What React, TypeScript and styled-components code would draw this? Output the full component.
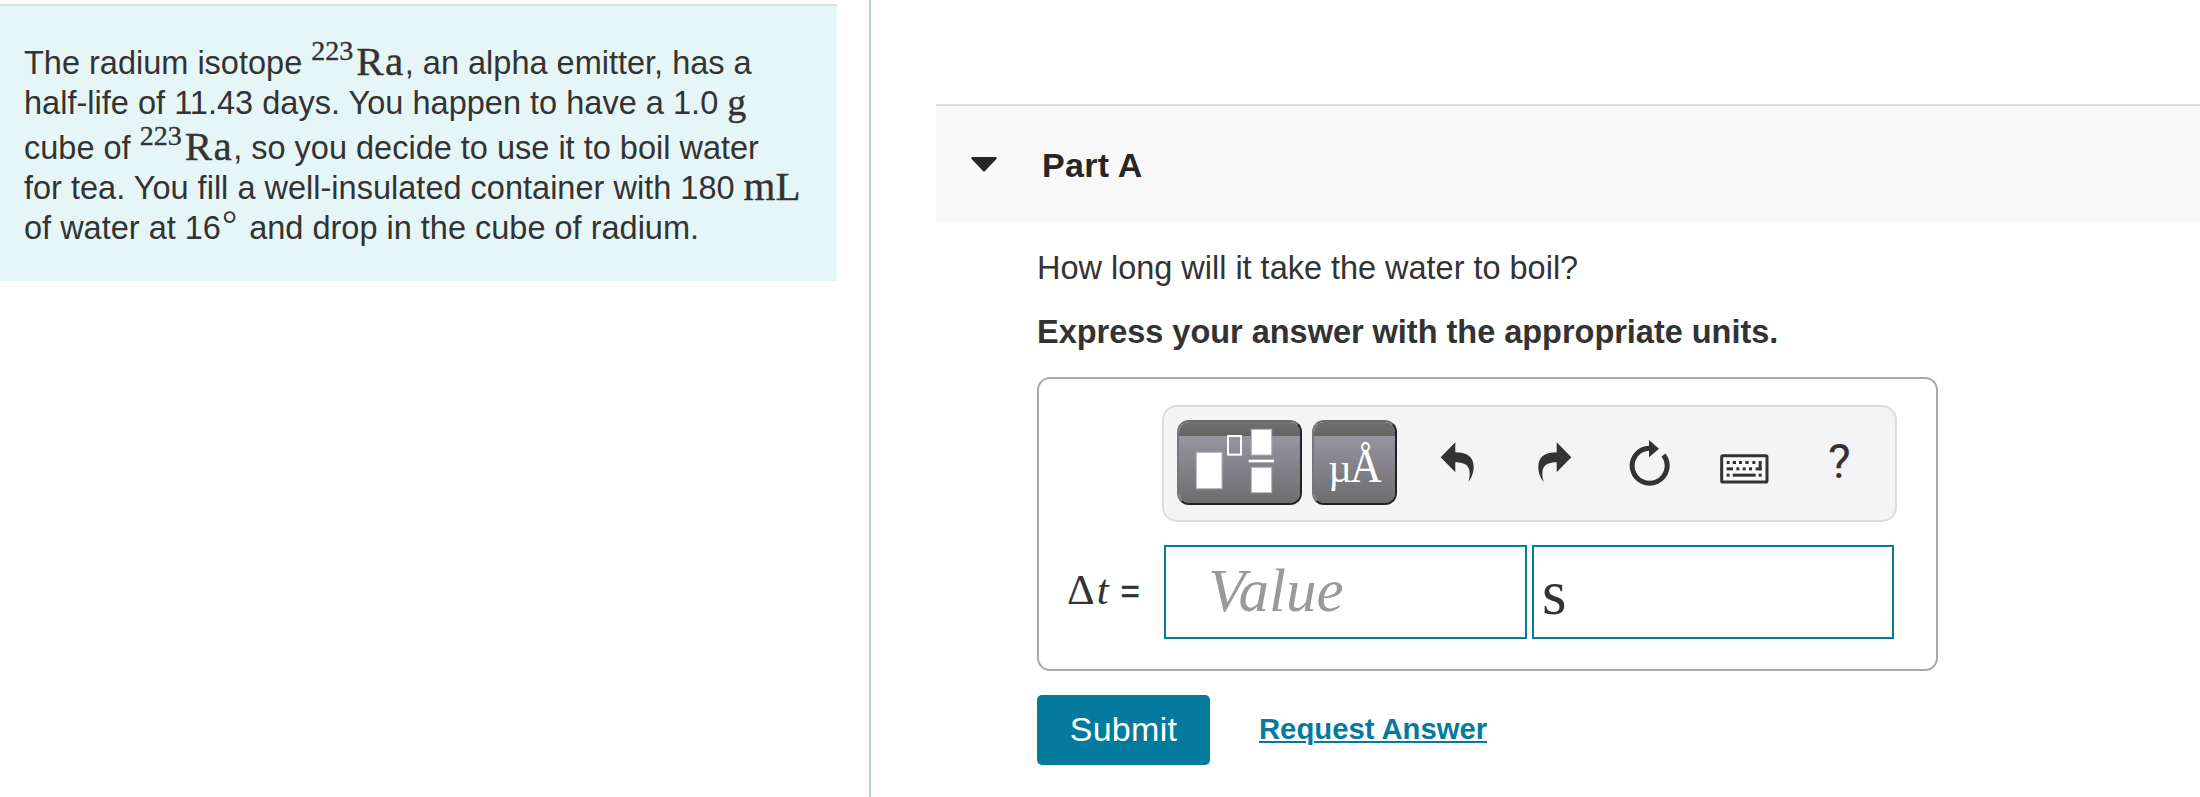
import React from "react";
import styled, { createGlobalStyle, css } from "styled-components";

const sans = `"Liberation Sans", Arial, sans-serif`;
const serif = `"Liberation Serif", "Times New Roman", serif`;
const teal = "#047a9c";

const Global = createGlobalStyle`
  * { box-sizing: border-box; }
  body { margin: 0; background: #fff; color: #333; font-family: ${sans}; overflow: hidden; }
`;

const Page = styled.main`
  display: flex;
  height: 797px;
  width: 2200px;
`;

const ProblemColumn = styled.aside`
  width: 871px;
  padding: 4px 32px 0 0;
  border-right: 2px solid #bccde0;
`;

const ProblemCard = styled.section`
  width: 837px;
  height: 277px;
  padding: 37px 0 0 24px;
  border-top: 2px solid #ddd;
  background: #e6f6f7;
`;

const Line = styled.div<{ $tall?: boolean; $spacing?: number }>`
  height: 40px;
  margin-top: ${(p) => (p.$tall ? 5 : 0)}px;
  font-size: 32.5px;
  line-height: 40px;
  white-space: pre;
  letter-spacing: ${(p) => p.$spacing ?? 0}px;
`;

const Unit = styled.span<{ $size?: number }>`
  font-family: ${serif};
  font-size: ${(p) => p.$size ?? 41}px;
  line-height: 0;
  letter-spacing: 0;
  vertical-align: -1px;
  -webkit-text-stroke: 0.4px #333;
`;

const Element = styled(Unit)`
  margin-left: 3px;
  letter-spacing: 1.5px;
`;

const MassNumber = styled.span`
  font-family: ${serif};
  font-size: 28px;
  line-height: 0;
  letter-spacing: 0;
  vertical-align: 14px;
  -webkit-text-stroke: 0.4px #333;
`;

const Degree = styled.span`
  margin: 0 3px 0 1px;
  font-family: ${serif};
  font-size: 38px;
  line-height: 0;
  vertical-align: 2px;
`;

const AnswerColumn = styled.section`
  flex: 1;
  padding: 104px 0 0 65px;
`;

const PartHeader = styled.header`
  display: flex;
  align-items: center;
  gap: 45px;
  height: 118px;
  padding-left: 35px;
  border-top: 2px solid #ddd;
  background: #f9f9f9;
`;

const Caret = styled.svg`
  width: 26px;
  height: 15px;
  fill: #262626;
`;

const PartTitle = styled.h2`
  margin: 0;
  padding-top: 2px;
  color: #262626;
  font-size: 34px;
  letter-spacing: 0.3px;
`;

const PartBody = styled.div`
  padding: 26px 0 0 101px;
`;

const Question = styled.p<{ $strong?: boolean }>`
  margin: 0 0 ${(p) => (p.$strong ? 25 : 24)}px;
  font-size: 32.5px;
  line-height: 40px;
  white-space: nowrap;
  letter-spacing: -0.02px;
  ${(p) => p.$strong && css`font-weight: 700;`}
`;

const AnswerBox = styled.div`
  width: 901px;
  height: 294px;
  border: 2px solid #a9a9a9;
  border-radius: 13px;
  padding: 26px 0 0;
`;

const Toolbar = styled.div`
  display: flex;
  height: 117px;
  width: 735px;
  margin-left: 123px;
  padding: 13px;
  border: 2px solid #ddd;
  border-radius: 15px;
  background: #f4f4f4;
`;

const PaletteButton = styled.button<{ $width: number }>`
  width: ${(p) => p.$width}px;
  height: 85px;
  flex: none;
  padding: 0;
  margin-right: 10px;
  border: 2px solid;
  border-color: #6b6b6b #222 #222 #777;
  border-radius: 12px;
  background: linear-gradient(#707070, #636363 14px, #9894a1 14px, #6d6d6d) padding-box;
  color: #fff;
`;

const TemplateIcon = styled.svg`
  display: block;
  width: 121px;
  height: 81px;
  fill: #fff;
`;

const UnitsLabel = styled.span`
  display: flex;
  align-items: baseline;
  justify-content: center;
  padding: 11px 0 0 1px;
  font-family: ${serif};
  font-size: 41px;
  line-height: 60px;
`;

const Angstrom = styled.span`
  display: inline-block;
  margin-left: -2px;
  font-size: 44px;
  line-height: 60px;
  transform: scaleY(1.12);
  transform-origin: 50% 75%;
`;

const ToolRow = styled.div`
  display: flex;
  align-items: flex-start;
  padding: 0 0 0 33px;
`;

const ToolButton = styled.button<{ $top: number; $gap: number }>`
  display: block;
  flex: none;
  margin: ${(p) => p.$top}px ${(p) => p.$gap}px 0 0;
  padding: 0;
  border: 0;
  background: none;
  color: #333;
  line-height: 0;
`;

const ToolIcon = styled.svg<{ $flip?: boolean }>`
  display: block;
  fill: currentColor;
  ${(p) => p.$flip && css`transform: scaleX(-1);`}
`;

const HelpMark = styled.span`
  display: block;
  font: 48px/46px Roboto, sans-serif;
`;

const EntryRow = styled.div`
  display: flex;
  margin-top: 23px;
`;

const EntryLabel = styled.div`
  width: 125px;
  padding: 17px 0 0 28px;
  font-family: ${serif};
  font-size: 43px;
  line-height: 56px;
  white-space: nowrap;
`;

const Variable = styled.i`
  margin-left: 2px;
`;

const Equals = styled.span`
  margin-left: 12px;
  font: 33px/0 ${sans};
  vertical-align: 1px;
  -webkit-text-stroke: 0.6px #333;
`;

const Field = styled.input<{ $kind: "value" | "units" }>`
  width: ${(p) => (p.$kind === "value" ? 363 : 362)}px;
  height: 94px;
  margin-right: 5px;
  padding: ${(p) => (p.$kind === "value" ? "0 0 2px 42px" : "3px 0 0 8px")};
  border: 2px solid ${teal};
  border-radius: 0;
  outline: 0;
  background: #fff;
  color: #333;
  font-family: ${serif};
  font-size: ${(p) => (p.$kind === "value" ? 61 : 63)}px;
  &::placeholder { color: #999; font-style: italic; opacity: 1; }
`;

const Actions = styled.div`
  display: flex;
  align-items: flex-start;
  margin-top: 24px;
`;

const Submit = styled.button`
  width: 173px;
  height: 70px;
  padding: 0 0 1px;
  border: 0;
  border-radius: 5px;
  background: ${teal};
  color: #fff;
  font: 34px ${sans};
  letter-spacing: 0.3px;
`;

const RequestLink = styled.a`
  margin: 16px 0 0 49px;
  color: ${teal};
  font-size: 29.25px;
  font-weight: 700;
  line-height: 36px;
  text-decoration: underline;
  text-decoration-thickness: 2px;
  text-underline-offset: 2px;
`;

const ARROW =
  "M0.7 15.3L15.3 0.3V10.3C26 10.3 33.7 14 33.7 25C33.7 31 31 37 28.3 40C29.5 36 30 33 29.5 29C28.5 22 22 20.3 15.3 20.3V30.3Z";

const keys = [
  [20, 21, 9, 9], [38, 21, 10, 9], [57, 21, 9, 9], [76, 21, 10, 9], [97, 21, 9, 9],
  [116, 21, 9, 28], [20, 40, 19, 9], [49, 40, 9, 9], [68, 40, 9, 9], [87, 40, 9, 9],
  [107, 40, 18, 9], [20, 59, 9, 9], [38, 59, 69, 9], [116, 59, 9, 9],
];

export default function App() {
  return (
    <Page>
      <Global />
      <ProblemColumn>
        <ProblemCard>
          <Line>{"The radium isotope "}<MassNumber>223</MassNumber><Element>Ra</Element>{", an alpha emitter, has a"}</Line>
          <Line $spacing={0.02}>{"half-life of 11.43 days. You happen to have a 1.0 "}<Unit $size={38}>g</Unit></Line>
          <Line $tall>{"cube of "}<MassNumber>223</MassNumber><Element>Ra</Element>{", so you decide to use it to boil water"}</Line>
          <Line $spacing={0.01}>{"for tea. You fill a well-insulated container with 180 "}<Unit>mL</Unit></Line>
          <Line>{"of water at 16"}<Degree>°</Degree>{" and drop in the cube of radium."}</Line>
        </ProblemCard>
      </ProblemColumn>
      <AnswerColumn>
        <PartHeader>
          <Caret viewBox="0 0 26 15"><path d="M1.2 0H24.8Q26.4 0.8 25.4 2L14 14Q13 15.2 12 14L0.6 2Q-0.4 0.8 1.2 0Z" /></Caret>
          <PartTitle>Part A</PartTitle>
        </PartHeader>
        <PartBody>
          <Question>How long will it take the water to boil?</Question>
          <Question $strong>Express your answer with the appropriate units.</Question>
          <AnswerBox>
            <Toolbar>
              <PaletteButton $width={125} aria-label="Templates">
                <TemplateIcon viewBox="0 0 363 243">
                  <g stroke="#b4b3b8" strokeWidth="3">
                    <rect x="52" y="91" width="77" height="109" />
                    <rect x="217" y="22" width="61" height="77" />
                    <rect x="217" y="136" width="61" height="76" />
                  </g>
                  <rect x="147" y="42" width="39" height="56" fill="none" stroke="#fff" strokeWidth="6" />
                  <rect x="209" y="113" width="76" height="8" />
                </TemplateIcon>
              </PaletteButton>
              <PaletteButton $width={85} aria-label="Units">
                <UnitsLabel>µ<Angstrom>Å</Angstrom></UnitsLabel>
              </PaletteButton>
              <ToolRow>
                <ToolButton $top={22} $gap={60} aria-label="Undo">
                  <ToolIcon width="36" height="42" viewBox="0 0 36 42"><path d={ARROW} /></ToolIcon>
                </ToolButton>
                <ToolButton $top={22} $gap={56} aria-label="Redo">
                  <ToolIcon $flip width="36" height="42" viewBox="0 0 36 42"><path d={ARROW} /></ToolIcon>
                </ToolButton>
                <ToolButton $top={20} $gap={48} aria-label="Reset">
                  <ToolIcon width="44" height="47" viewBox="0 0 44 47">
                    <path d="M35.5 15A17.5 17.5 0 1 1 21.3 8.2" fill="none" stroke="currentColor" strokeWidth="5" />
                    <path d="M21 0L31 8.7L21 17.3Z" />
                  </ToolIcon>
                </ToolButton>
                <ToolButton $top={34} $gap={59} aria-label="Keyboard shortcuts">
                  <ToolIcon width="49" height="30" viewBox="0 0 147 90">
                    <rect x="5" y="5" width="136" height="79" rx="4" fill="#fafafa" stroke="currentColor" strokeWidth="9" />
                    {keys.map(([x, y, w, h]) => <rect key={`${x}-${y}`} x={x} y={y} width={w} height={h} />)}
                  </ToolIcon>
                </ToolButton>
                <ToolButton $top={19} $gap={0} aria-label="Help"><HelpMark>?</HelpMark></ToolButton>
              </ToolRow>
            </Toolbar>
            <EntryRow>
              <EntryLabel>Δ<Variable>t</Variable><Equals>=</Equals></EntryLabel>
              <Field $kind="value" placeholder="Value" />
              <Field $kind="units" defaultValue="s" />
            </EntryRow>
          </AnswerBox>
          <Actions>
            <Submit>Submit</Submit>
            <RequestLink>Request Answer</RequestLink>
          </Actions>
        </PartBody>
      </AnswerColumn>
    </Page>
  );
}
